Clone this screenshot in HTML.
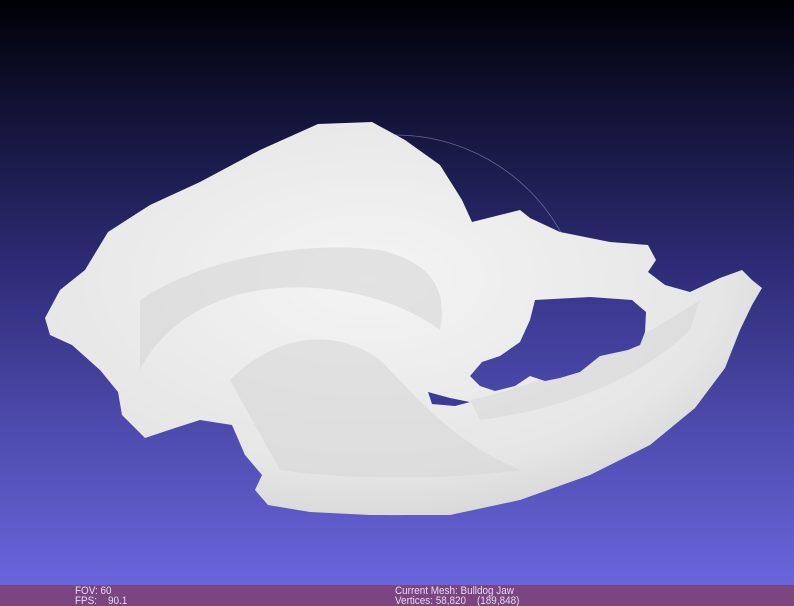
<!DOCTYPE html>
<html><head><style>
html,body{margin:0;padding:0;width:794px;height:606px;overflow:hidden}
body{background:linear-gradient(to bottom,#000008 0%,#14143a 20%,#2f2d78 45%,#4d4aac 70%,#6d69e3 100%);position:relative;font-family:"Liberation Sans",sans-serif}
.bar{position:absolute;left:0;top:585px;width:794px;height:21px;background:#7a4580;color:#e8dcef;font-size:11px;line-height:10px}
.bar div{position:absolute;top:1px;transform:scaleX(0.9);transform-origin:left}
svg{position:absolute;left:0;top:0}
</style></head><body>
<svg width="794" height="585" viewBox="0 0 794 585">
<defs>
<radialGradient id="g" cx="0.45" cy="0.4" r="0.7">
<stop offset="0" stop-color="#f4f4f4"/><stop offset="0.7" stop-color="#e6e6e6"/><stop offset="1" stop-color="#cfcfcf"/>
</radialGradient>
<linearGradient id="h" x1="0" y1="0" x2="0" y2="1"><stop offset="0" stop-color="#3a3890"/><stop offset="1" stop-color="#4a48a8"/></linearGradient>
</defs>
<circle cx="395" cy="325" r="190" fill="none" stroke="#9a9ac0" stroke-width="0.8" opacity="0.6"/>
<path fill="url(#g)" d="M45,318 L60,290 L85,270 L108,232 L150,205 L200,182 L260,150 L318,124 L372,122 L405,140 L440,165 L462,200 L472,222 L520,210 L530,218 L560,232 L610,242 L648,245 L656,260 L648,272 L665,285 L690,292 L720,278 L742,270 L752,280 L762,288 L752,305 L740,330 L725,368 L695,408 L650,445 L590,475 L520,500 L450,515 L370,515 L310,512 L268,505 L255,490 L262,475 L245,455 L232,425 L200,420 L175,428 L145,438 L122,415 L118,392 L100,370 L72,345 L50,335 Z"/>
<path fill="#d2d2d2" opacity="0.5" d="M140,300 C200,260 300,240 380,250 C420,260 450,280 440,330 C400,300 330,280 260,290 C200,300 160,330 140,370 Z"/>
<path fill="#d4d4d4" opacity="0.5" d="M230,380 C280,330 340,330 380,360 C420,400 450,440 520,470 C450,480 350,480 280,470 Z"/>
<path fill="#d8d8d8" opacity="0.6" d="M470,400 C560,380 640,340 700,300 L690,330 C640,380 560,410 480,420 Z"/>
<path fill="url(#h)" d="M535,300 L590,297 L632,300 L646,312 L645,332 L640,345 L628,350 L600,356 L580,372 L560,378 L545,381 L530,376 L515,386 L495,391 L480,386 L470,376 L482,362 L500,356 L520,342 L530,320 Z"/>
<path fill="#3c3a96" d="M428,392 L450,398 L470,402 L455,406 L432,404 Z"/>
</svg>
<div class="bar">
<div style="left:75px">FOV: 60<br>FPS:&nbsp;&nbsp;&nbsp; 90.1</div>
<div style="left:395px">Current Mesh: Bulldog Jaw<br>Vertices: 58,820&nbsp;&nbsp;&nbsp; (189,848)</div>
</div>
</body></html>
